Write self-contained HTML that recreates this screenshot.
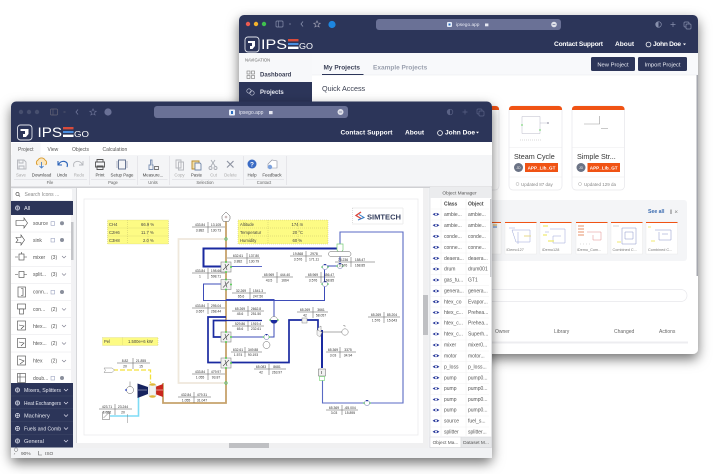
<!DOCTYPE html>
<html><head><meta charset="utf-8"><style>
html,body{margin:0;padding:0;background:#fff;width:720px;height:474px;overflow:hidden}
svg{display:block;font-family:"Liberation Sans",sans-serif;filter:blur(.3px)}
.h{fill:#fff;font-weight:700;font-size:6.6px}
.tb{font-size:4.4px;fill:#444;text-anchor:middle}
.tbd{font-size:4.4px;fill:#aaa;text-anchor:middle}
.gl{font-size:4.2px;fill:#666;text-anchor:middle}
.sb{font-size:5px;fill:#555}
.cat{font-size:5.6px;fill:#e6e8f0}
.om{font-size:5px;fill:#555}
.n{font-size:3.4px;fill:#333;text-anchor:middle}
.y{font-size:4.2px;fill:#444}
.lb{stroke:#555;stroke-width:.5;fill:none}
</style></head><body>
<svg width="720" height="474" viewBox="0 0 720 474">
<defs>
<filter id="s1" x="-15%" y="-15%" width="130%" height="135%"><feDropShadow dx="0" dy="5" stdDeviation="6" flood-color="#000" flood-opacity=".55"/></filter>
<g id="eye"><path d="M-3.4 0Q0-2.8 3.4 0Q0 2.8-3.4 0Z" fill="#2a3a9c"/><circle r="1" fill="#fff"/></g>
<path id="chev" d="M-2-1L0 1L2-1" fill="none" stroke="#778" stroke-width=".6"/>
<path id="chw" d="M-2-1L0 1L2-1" fill="none" stroke="#dde" stroke-width=".7"/>
<g id="ext"><rect x="-2" y="-1.6" width="3.6" height="3.6" fill="none" stroke="#8a93b5" stroke-width=".5"/><circle cx="9" cy="0" r="2" fill="#8a8f9c"/></g>
<g id="hub"><circle r="2.1" fill="none" stroke="#dfe2ee" stroke-width=".7"/><path d="M-2.1 0H2.1M0-2.1V2.1" stroke="#dfe2ee" stroke-width=".5"/></g>
<g id="hx"><rect x="-5" y="-5" width="10" height="10" fill="#f1f1f1" stroke="#888" stroke-width=".6"/><path d="M-3 3L3-3M-1-3L1 3" stroke="#444" stroke-width=".6"/><circle cx="5" cy="0" r="1" fill="#5c5"/><circle cx="0" cy="5" r="1" fill="#5c5"/><circle cx="0" cy="-5" r="1" fill="#5c5"/></g>
<g id="pmp"><circle r="2.6" fill="#fff" stroke="#8088b8" stroke-width=".6"/><path d="M-1.300 -3L1.300-3L0-1.200Z" fill="#1a2ea0"/><circle cx="-3" r=".8" fill="#5c5"/><circle cx="3" r=".8" fill="#5c5"/></g>
</defs>

<!-- BACK WINDOW -->
<rect x="239" y="15" width="459" height="339" rx="5" fill="#fff" filter="url(#s1)"/>
<path d="M239 53V20a5 5 0 0 1 5-5H693a5 5 0 0 1 5 5V53Z" fill="#2c3559"/>
<circle cx="248" cy="24" r="2.2" fill="#ec5b50"/><circle cx="256" cy="24" r="2.2" fill="#f3b32c"/><circle cx="264" cy="24" r="2.2" fill="#3fc14e"/>
<rect x="276" y="21" width="7" height="6" rx="1" fill="none" stroke="#8890ad" stroke-width=".7"/><path d="M278.5 21V27" stroke="#8890ad" stroke-width=".6"/>
<path d="M289 24h2" stroke="#8890ad" stroke-width=".7"/>
<path d="M303 21.5L301 24L303 26.5" fill="none" stroke="#8890ad" stroke-width=".8"/>
<path d="M317 20.8l1 2.2 2.3.2-1.8 1.5.6 2.3-2.1-1.2-2.1 1.2.6-2.3-1.8-1.5 2.3-.2z" fill="none" stroke="#aab" stroke-width=".6"/>
<circle cx="332" cy="24.5" r="3.6" fill="#1d86e0"/>
<rect x="376" y="19" width="185" height="11" rx="3" fill="#6a7196"/>
<rect x="447" y="22" width="5" height="5" rx="1" fill="#e8eefa"/><rect x="448.5" y="23.5" width="2" height="2" fill="#2a6dc0"/>
<text x="456" y="26.2" font-size="4.8" fill="#e6e8f2">ipsego.app</text>
<rect x="485" y="23.5" width="3.4" height="2.8" fill="#e6e8f2"/>
<circle cx="554" cy="24.5" r="2.8" fill="#dfe1ea"/><path d="M552.6 24.5h2.8" stroke="#6a7196" stroke-width=".7"/>
<circle cx="658.5" cy="24.5" r="2.8" fill="none" stroke="#8890ad" stroke-width=".7"/><path d="M658.5 21.7a2.8 2.8 0 0 0 0 5.6z" fill="#8890ad"/>
<path d="M670.5 24.5h5M673 22v5" stroke="#8890ad" stroke-width=".7"/>
<rect x="684" y="22" width="5" height="5" rx="1" fill="none" stroke="#8890ad" stroke-width=".7"/><rect x="686" y="24" width="5" height="5" rx="1" fill="#2c3559" stroke="#8890ad" stroke-width=".7"/>
<!-- back logo -->
<rect x="245" y="37" width="14" height="15" rx="3" fill="none" stroke="#dfe2ea" stroke-width=".9"/><path d="M248 41h7v5l-2.5 3H250v-3h2v-3h-4z" fill="#fff"/>
<text x="261" y="49" font-size="13.500" fill="#fff" textLength="26" lengthAdjust="spacingAndGlyphs">IPS</text>
<rect x="288" y="39" width="10.500" height="2.400" fill="#d94b3b"/><rect x="288" y="43" width="10.500" height="2" fill="#4a8fe0"/><rect x="288" y="46.600" width="10.500" height="2.400" fill="#fff"/>
<text x="299" y="49" font-size="8.500" fill="#fff" textLength="14" lengthAdjust="spacingAndGlyphs">GO</text>
<text x="554" y="46" class="h" textLength="49">Contact Support</text><text x="615" y="46" class="h">About</text>
<circle cx="648.5" cy="44.5" r="2.4" fill="none" stroke="#fff" stroke-width=".8"/><text x="653" y="46" class="h" textLength="28">John Doe</text><path d="M683 43.5h3l-1.5 1.7z" fill="#fff"/>
<!-- back sidebar -->
<rect x="239" y="53" width="73" height="301" fill="#f7f8fa"/>
<text x="245" y="61.5" font-size="4.2" fill="#666">NAVIGATION</text>
<g fill="none" stroke="#777" stroke-width=".6"><rect x="247" y="71" width="3" height="3"/><rect x="251.5" y="71" width="3" height="3"/><rect x="247" y="75.5" width="3" height="3"/><rect x="251.5" y="75.5" width="3" height="3"/></g>
<text x="260" y="76.5" font-size="6" font-weight="700" fill="#3a3f55">Dashboard</text>
<rect x="239" y="82" width="73" height="30" fill="#2c3559"/>
<g fill="none" stroke="#cfd3e2" stroke-width=".6"><circle cx="249" cy="91" r="2.2"/><circle cx="252" cy="93" r="2.2"/></g>
<text x="260" y="94" font-size="6" font-weight="700" fill="#e8eaf2">Projects</text>
<!-- back main -->
<rect x="312" y="53" width="386" height="22" fill="#f8f9fb"/><path d="M312 75H698" stroke="#e8e9ee" stroke-width=".6"/>
<text x="323.5" y="69.5" font-size="6.5" font-weight="700" fill="#3c4258">My Projects</text>
<path d="M322 74.5H363.5" stroke="#2c3559" stroke-width="1"/>
<text x="373" y="69.5" font-size="6.5" font-weight="700" fill="#9aa0ae">Example Projects</text>
<text x="322" y="91" font-size="7.2" fill="#3a3f50">Quick Access</text>
<rect x="591" y="57" width="44" height="14" rx="1.5" fill="#2c3559"/><text x="613" y="66.4" font-size="5.8" fill="#e8eaf2" text-anchor="middle">New Project</text>
<rect x="638" y="57" width="49" height="14" rx="1.5" fill="#2c3559"/><text x="662.5" y="66.4" font-size="5.8" fill="#e8eaf2" text-anchor="middle">Import Project</text>
<!-- cards -->
<g>
<rect x="455" y="106" width="44" height="84" rx="4" fill="#fff" stroke="#e6e6ea" stroke-width=".7"/>
<path d="M455 110v-1a3 3 0 0 1 3-3h38a3 3 0 0 1 3 3v1z" fill="#f05314"/>
<rect x="509" y="106" width="53" height="84" rx="4" fill="#fff" stroke="#e6e6ea" stroke-width=".7"/>
<path d="M509 110v-1a3 3 0 0 1 3-3h47a3 3 0 0 1 3 3v1z" fill="#f05314"/>
<path d="M509 147.5H562M509 177H562" stroke="#ebebee" stroke-width=".6"/>
<path d="M522 116.500H540V133.500H522ZM540 123H548" fill="none" stroke="#aab" stroke-width=".4"/><circle cx="522" cy="125" r="1" fill="#9d9"/><circle cx="540" cy="130" r="1" fill="#9d9"/><circle cx="548" cy="123" r=".9" fill="#99a"/>
<path d="M520 140H541" stroke="#ccc" stroke-width=".8" stroke-dasharray="1 1"/>
<text x="514" y="159" font-size="7.200" fill="#333">Steam Cycle</text>
<circle cx="518.500" cy="167.500" r="4.500" fill="#6b7385"/><text x="518.500" y="169" font-size="3.400" fill="#eee" text-anchor="middle">JD</text>
<rect x="525" y="163" width="33" height="9" fill="#f05314"/><text x="541.500" y="169.300" font-size="4.600" font-weight="700" fill="#fff" text-anchor="middle">APP_Lib_GT</text>
<circle cx="517.500" cy="184" r="1.500" fill="none" stroke="#999" stroke-width=".4"/><text x="521" y="185.800" font-size="4.500" fill="#888">Updated 87 day</text>
<rect x="572" y="106" width="52.500" height="84" rx="4" fill="#fff" stroke="#e6e6ea" stroke-width=".7"/>
<path d="M572 110v-1a3 3 0 0 1 3-3h46.500a3 3 0 0 1 3 3v1z" fill="#f05314"/>
<path d="M572 147.500H624.500M572 177H624.500" stroke="#ebebee" stroke-width=".6"/>
<path d="M584 124H599.500V116" fill="none" stroke="#999" stroke-width=".6"/><path d="M601 128.500h7" stroke="#bbb" stroke-width=".8"/>
<text x="577" y="159" font-size="7.200" fill="#333">Simple Str...</text>
<circle cx="581" cy="167.500" r="4.500" fill="#6b7385"/><text x="581" y="169" font-size="3.400" fill="#eee" text-anchor="middle">JD</text>
<rect x="587.500" y="163" width="32.500" height="9" fill="#f05314"/><text x="603.700" y="169.300" font-size="4.600" font-weight="700" fill="#fff" text-anchor="middle">APP_Lib_GT</text>
<circle cx="580" cy="184" r="1.500" fill="none" stroke="#999" stroke-width=".4"/><text x="584" y="185.800" font-size="4.500" fill="#888">Updated 129 da</text>
</g>
<!-- recent panel -->
<rect x="460" y="200" width="227" height="61" rx="3" fill="#f4f5f7"/>
<text x="648" y="213" font-size="5.200" font-weight="700" fill="#3a6bb0">See all</text>
<path d="M671 209.500V214" stroke="#444" stroke-width=".7"/><path d="M675 210.500l2.400 2.400m0-2.400l-2.400 2.400" stroke="#555" stroke-width=".5"/>
<g>
<rect x="470" y="222" width="31" height="32" fill="#fff" stroke="#e6e6e6" stroke-width=".4"/><path d="M470 222.500H501" stroke="#f05314" stroke-width="1"/><path d="M493 225h4" stroke="#e4a93a" stroke-width="1"/><path d="M493 227h4" stroke="#4a7fd0" stroke-width="1"/>
<rect x="505" y="222" width="31.500" height="32" fill="#fff" stroke="#e6e6e6" stroke-width=".4"/><path d="M505 222.500H536.500" stroke="#f05314" stroke-width="1"/><path d="M512 230h18v12h-14zM518 232v12M509 228h6" fill="none" stroke="#9aa5d8" stroke-width=".5"/><path d="M524 236h7" stroke="#e7d88a" stroke-width="1"/>
<text x="506.500" y="251" font-size="3.800" fill="#777">iDemo127</text>
<rect x="540" y="222" width="31.500" height="32" fill="#fff" stroke="#e6e6e6" stroke-width=".4"/><path d="M540 222.500H571.500" stroke="#f05314" stroke-width="1"/><path d="M550 229h15v14h-12v-7h8M545 232h4" fill="none" stroke="#9aa5d8" stroke-width=".5"/><path d="M543 226h5M543 235h4M548 241h6" stroke="#f0ea70" stroke-width="1.300"/>
<text x="542" y="251" font-size="3.800" fill="#777">iDemo128</text>
<rect x="576" y="222" width="31.500" height="32" fill="#fff" stroke="#e6e6e6" stroke-width=".4"/><path d="M576 222.500H607.500" stroke="#f05314" stroke-width="1"/><path d="M578 226h6M578 229h6M578 232h6M578 235h6" stroke="#efb59b" stroke-width="1.400"/><path d="M587 232h14v8h-8v-5" fill="none" stroke="#e08a8a" stroke-width=".5"/><path d="M580 244h10" stroke="#bbb" stroke-width=".5" stroke-dasharray="1 2"/>
<text x="577" y="251" font-size="3.800" fill="#777">iDemo_Com...</text>
<rect x="611" y="222" width="31.500" height="32" fill="#fff" stroke="#e6e6e6" stroke-width=".4"/><path d="M611 222.500H642.500" stroke="#f05314" stroke-width="1"/><path d="M622 228h14v16h-14zM625 232h8v7h-8z" fill="none" stroke="#8893c8" stroke-width=".5"/><path d="M613 226h6" stroke="#bbb" stroke-width=".6"/><path d="M617 242h4" stroke="#f0ea70" stroke-width="1"/>
<text x="612.500" y="251" font-size="3.800" fill="#777">Combined C...</text>
<rect x="646" y="222" width="31.500" height="32" fill="#fff" stroke="#e6e6e6" stroke-width=".4"/><path d="M646 222.500H677.500" stroke="#f05314" stroke-width="1"/><path d="M655 230h16v10h-12v-8M662 234h6" fill="none" stroke="#8893c8" stroke-width=".5"/><path d="M648 227h3M651 241h4" stroke="#f0ea70" stroke-width="1"/>
<text x="648" y="251" font-size="3.800" fill="#777">Combined C...</text>
</g>
<rect x="460" y="289.500" width="227" height="12" rx="6" fill="#fff" stroke="#e8e8ec" stroke-width=".7"/>
<g font-size="5" fill="#666"><text x="495" y="333">Owner</text><text x="554" y="333">Library</text><text x="614" y="333">Changed</text><text x="659" y="333">Actions</text></g>
<rect x="490" y="341.500" width="198" height="2" fill="#ededf0"/>
<rect x="696.500" y="75" width="1.500" height="201" fill="#a5a7ae"/>

<!-- FRONT WINDOW -->
<rect x="11" y="101.500" width="481" height="356.500" rx="5" fill="#eeeff1" filter="url(#s1)"/>
<path d="M11 142V106.500a5 5 0 0 1 5-5H487a5 5 0 0 1 5 5V142Z" fill="#2c3559"/>
<circle cx="21" cy="112" r="2.200" fill="#474f6e"/><circle cx="29" cy="112" r="2.200" fill="#474f6e"/><circle cx="37" cy="112" r="2.200" fill="#474f6e"/>
<rect x="50.500" y="109" width="7" height="6" rx="1" fill="none" stroke="#667" stroke-width=".7"/><path d="M53 109V115" stroke="#667" stroke-width=".6"/>
<path d="M63.500 112h2" stroke="#667" stroke-width=".7"/>
<path d="M78 109.500L76 112L78 114.500" fill="none" stroke="#70779a" stroke-width=".8"/>
<path d="M93 108.800l1 2.200 2.300.2-1.800 1.500.6 2.300-2.100-1.200-2.100 1.200.6-2.300-1.800-1.500 2.300-.2z" fill="none" stroke="#70779a" stroke-width=".6"/>
<circle cx="108" cy="112" r="3.600" fill="#6a7196"/>
<rect x="154" y="106" width="194" height="12" rx="3" fill="#6a7196"/>
<rect x="229" y="109.500" width="6" height="6" rx="1" fill="#e8eefa"/><rect x="231" y="111" width="2" height="3" fill="#2a6dc0"/>
<text x="239" y="114.200" font-size="5" fill="#e6e8f2">ipsego.app</text>
<rect x="269" y="111" width="3.600" height="3.200" fill="#e6e8f2"/>
<circle cx="340.500" cy="112" r="3" fill="#dfe1ea"/><path d="M339 112h3" stroke="#6a7196" stroke-width=".7"/>
<circle cx="450" cy="112" r="2.800" fill="none" stroke="#5a6285" stroke-width=".7"/><path d="M450 109.200a2.800 2.800 0 0 0 0 5.600z" fill="#5a6285"/>
<path d="M462.500 112h5M465 109.500v5" stroke="#5a6285" stroke-width=".7"/>
<rect x="477" y="109" width="5" height="5" rx="1" fill="none" stroke="#5a6285" stroke-width=".7"/><rect x="479" y="111" width="5" height="5" rx="1" fill="#2c3559" stroke="#5a6285" stroke-width=".7"/>
<!-- front logo -->
<rect x="17.500" y="125" width="14.500" height="15" rx="3" fill="none" stroke="#dfe2ea" stroke-width=".9"/><path d="M20.500 129h8v5l-2.500 3h-3v-3h2v-3h-4.500z" fill="#fff"/>
<text x="37.500" y="137" font-size="13.800" fill="#fff" textLength="24.500" lengthAdjust="spacingAndGlyphs">IPS</text>
<rect x="63" y="127" width="10.500" height="2.400" fill="#d94b3b"/><rect x="63" y="131" width="10.500" height="2" fill="#4a8fe0"/><rect x="63" y="134.600" width="10.500" height="2.400" fill="#fff"/>
<text x="74" y="137" font-size="8.500" fill="#fff" textLength="15" lengthAdjust="spacingAndGlyphs">GO</text>
<text x="340.500" y="134.500" class="h" textLength="52">Contact Support</text><text x="405" y="134.500" class="h">About</text>
<circle cx="440" cy="133" r="2.400" fill="none" stroke="#fff" stroke-width=".8"/><text x="445" y="134.500" class="h">John Doe</text><path d="M476 131.800h3l-1.500 1.700z" fill="#fff"/>
<!-- tabs -->
<rect x="11" y="142" width="481" height="13" fill="#fff"/>
<rect x="11.500" y="143" width="29" height="12" fill="#f4f5f7"/>
<g font-size="5" fill="#555"><text x="18" y="150.800">Project</text><text x="47.500" y="150.800">View</text><text x="72" y="150.800">Objects</text><text x="102.500" y="150.800">Calculation</text></g>
<!-- toolbar -->
<rect x="11" y="155" width="481" height="31.500" fill="#f4f5f7"/>
<rect x="11" y="186.500" width="481" height="1.500" fill="#cfd0d3"/>
<g stroke="#dcdde1" stroke-width=".6"><path d="M89.500 156V185M137.500 156V185M169.500 156V185M243.500 156V185M286.500 156V185"/><path d="M14 179.300H87M91 179.300H135.500M140 179.300H167.500M172 179.300H240M246 179.300H284"/></g>
<!-- toolbar icons -->
<g fill="none" stroke-width=".9">
<path d="M17.500 160h6.500l2 2v7h-8.500zM19 160v3h4v-3M19 169v-3h5v3" stroke="#b5b7bc"/>
<path d="M37.500 165a3 3 0 0 1 .5-5 4 4 0 0 1 7 0 3 3 0 0 1 .5 5" stroke="#d99a2c" fill="#fbe7c0"/><path d="M41.500 162v6m-2-2l2 2 2-2" stroke="#4a7fc8"/>
<path d="M58 161v4h4M58.500 165a5 5 0 0 1 8.500-2 5 5 0 0 1 0 4" stroke="#2a62b8" stroke-width="1.100"/>
<path d="M83 161v4h-4M82.500 165a5 5 0 0 0-8.500-2 5 5 0 0 0 0 4" stroke="#b5b7bc"/>
<path d="M97 162v-2.500h6v2.500M95.500 162h9v5h-9zM97 166h6v3.500h-6z" stroke="#555"/>
<rect x="118.500" y="160" width="7" height="9" stroke="#5a6a8a"/><path d="M117 161V168M127 161V168" stroke="#a9afc0"/>
<path d="M150.500 160v5h-1.500v4.500h4V165h-1v-5z" stroke="#7a8fb0"/><path d="M154.500 169.500h4v-3h-4z" stroke="#777"/>
<path d="M176 160h5v8h-5zM178.500 162h5v8h-5z" stroke="#b5b7bc"/>
<path d="M192 161h7v8h-7z" stroke="#b78b2b" fill="#f3dfa8"/><path d="M195 163h5l1 1v6h-6z" stroke="#7388a8" fill="#f5f6f8"/>
<path d="M211 160l4 6M215 160l-4 6" stroke="#a9adb5"/><circle cx="210.500" cy="168" r="1.500" stroke="#a9adb5"/><circle cx="215.500" cy="168" r="1.500" stroke="#a9adb5"/>
<path d="M227 161l6.500 6.500M233.500 161l-6.500 6.500" stroke="#8f95a3" stroke-width="1.200"/>
</g>
<circle cx="252" cy="164" r="4.500" fill="#3a6bc4"/><text x="252" y="166.300" font-size="6.500" font-weight="700" fill="#fff" text-anchor="middle">?</text>
<path d="M268 164l4-4 5 1v7h-9z" fill="#fff" stroke="#8b90a0" stroke-width=".6"/><circle cx="270" cy="167" r="2.200" fill="#7ea3dd"/>
<text class="tbd" x="21" y="176.300">Save</text><text class="tb" x="41.500" y="176.300">Download</text><text class="tb" x="62" y="176.300">Undo</text><text class="tbd" x="79" y="176.300">Redo</text>
<text class="tb" x="100" y="176.300">Print</text><text class="tb" x="122" y="176.300">Setup Page</text><text class="tb" x="153" y="176.300">Measure...</text>
<text class="tbd" x="179.500" y="176.300">Copy</text><text class="tb" x="196.500" y="176.300">Paste</text><text class="tbd" x="213.500" y="176.300">Cut</text><text class="tbd" x="230.500" y="176.300">Delete</text>
<text class="tb" x="252" y="176.300">Help</text><text class="tb" x="272" y="176.300">Feedback</text>
<text class="gl" x="50" y="184.200">File</text><text class="gl" x="113" y="184.200">Page</text><text class="gl" x="153" y="184.200">Units</text><text class="gl" x="205" y="184.200">Selection</text><text class="gl" x="264" y="184.200">Contact</text>
<!-- left panel -->
<rect x="11" y="188" width="65" height="260" fill="#f1f2f4"/>
<rect x="13" y="189" width="59" height="11" rx="1" fill="#fff"/>
<circle cx="17.500" cy="194" r="1.600" fill="none" stroke="#444" stroke-width=".6"/><path d="M18.700 195.200l1.300 1.300" stroke="#444" stroke-width=".6"/>
<text x="24.500" y="196" font-size="5" fill="#888">Search Icons ...</text>
<rect x="11" y="201" width="62" height="14" fill="#2c3559"/>
<use href="#hub" x="17.500" y="208"/><text x="24" y="210" class="cat">All</text>
<rect x="11" y="215" width="60" height="168" fill="#fff"/>
<rect x="71" y="215" width="2.500" height="168" fill="#f2f2f4"/><rect x="71" y="222" width="2.500" height="38" fill="#c4c5c9"/>
<g stroke="#e6e6e8" stroke-width=".5"><path d="M11 232H71M11 249.200H71M11 266.500H71M11 283.500H71M11 300.500H71M11 317.500H71M11 334.700H71M11 352H71M11 369.500H71"/></g>
<g class="sb" font-size="5" fill="#555">
<text x="33" y="224.800">source</text><text x="33" y="241.800">sink</text><text x="33" y="258.800">mixer</text><text x="33" y="276">split...</text><text x="33" y="293.500">conn...</text><text x="33" y="310.800">con...</text><text x="33" y="328">htex...</text><text x="33" y="345">htex...</text><text x="33" y="362.500">htex</text><text x="33" y="379.800">doub...</text>
<text x="51" y="258.800">(3)</text><text x="51" y="276">(3)</text><text x="51" y="310.800">(2)</text><text x="51" y="328">(2)</text><text x="51" y="345">(2)</text><text x="51" y="362.500">(2)</text>
</g>
<use href="#ext" x="53" y="223.300"/><use href="#ext" x="53" y="240"/><use href="#ext" x="53" y="292"/><use href="#ext" x="53" y="378"/>
<use href="#chev" x="64" y="257"/><use href="#chev" x="64" y="274.500"/><use href="#chev" x="64" y="309.300"/><use href="#chev" x="64" y="326"/><use href="#chev" x="64" y="343.500"/><use href="#chev" x="64" y="361"/>
<g fill="#fff" stroke="#444" stroke-width=".6">
<path d="M16 220.500h8v-2.500l3.500 5-3.500 5v-2.500h-8z"/><path d="M16 237.500h5v-2.500l3.500 5-3.500 5v-2.500h-5l2-2.500z"/>
<rect x="19" y="254" width="5" height="6"/><path d="M18 257h-3M24 257h3M21.500 254v-2" fill="none"/>
<rect x="19" y="271.500" width="5" height="6"/><path d="M18 274.500h-3M24 274.500h3" fill="none"/>
<rect x="18" y="287" width="7.500" height="10"/><path d="M21 288.500h2v7h-2" fill="none"/>
<rect x="17.500" y="304" width="8" height="5"/><rect x="19.500" y="309" width="4" height="5"/>
<rect x="17.500" y="321" width="8" height="9"/><path d="M19 325l5 1-3 3" fill="none"/>
<rect x="17.500" y="338.500" width="8" height="9"/><path d="M19 342l5 1-3 3" fill="none"/>
<rect x="17.500" y="356" width="8" height="9"/><path d="M19 359l5 2-4 3" fill="none"/>
<rect x="17.500" y="373.500" width="8" height="9"/><path d="M17.500 377h8M20 373.500v9" fill="none"/>
</g>
<!-- categories -->
<rect x="11" y="383" width="62" height="64.500" fill="#2c3559"/>
<g stroke="#3f4869" stroke-width=".5"><path d="M11 396H73M11 408.800H73M11 421.500H73M11 434.500H73"/></g>
<use href="#hub" x="17.500" y="390"/><use href="#hub" x="17.500" y="403"/><use href="#hub" x="17.500" y="415.500"/><use href="#hub" x="17.500" y="428.500"/><use href="#hub" x="17.500" y="441"/>
<text x="24" y="392" class="cat" textLength="37" lengthAdjust="spacingAndGlyphs">Mixers, Splitters</text>
<text x="24" y="405" class="cat" textLength="37" lengthAdjust="spacingAndGlyphs">Heat Exchangers</text>
<text x="24" y="417.500" class="cat">Machinery</text>
<text x="24" y="430.500" class="cat" textLength="37" lengthAdjust="spacingAndGlyphs">Fuels and Comb</text>
<text x="24" y="443" class="cat">General</text>
<use href="#chw" x="66" y="390"/><use href="#chw" x="66" y="403"/><use href="#chw" x="66" y="415.500"/><use href="#chw" x="66" y="428.500"/><use href="#chw" x="66" y="441"/>
<!-- status -->
<rect x="11" y="448" width="481" height="10" fill="#f1f2f4"/>
<path d="M16 451.500a1.800 1.800 0 1 1 .1 0M15 453l-1 1.500" fill="none" stroke="#666" stroke-width=".5"/>
<text x="21" y="455" font-size="4.800" fill="#555">90%</text>
<path d="M38.500 451v4h3.500" fill="none" stroke="#666" stroke-width=".6"/><text x="45" y="455" font-size="4.800" fill="#555">ISO</text>

<!-- canvas -->
<rect x="76" y="188" width="352" height="260" fill="#fff"/>
<rect x="76" y="188" width="1" height="260" fill="#d6d7da"/>
<rect x="84" y="199" width="334" height="236" fill="#fff" stroke="#e9e9ea" stroke-width=".7"/>
<rect x="76" y="443" width="347" height="5" fill="#f0f0f1"/><rect x="229" y="443" width="40" height="5" fill="#bfc0c3"/>
<rect x="423" y="188" width="5" height="260" fill="#f0f0f1"/><rect x="423" y="295" width="5" height="40" fill="#bfc0c3"/>

<!-- yellow tables -->
<g>
<rect x="107.500" y="220" width="61" height="24" fill="#fdfb84" stroke="#b9b66a" stroke-width=".4" stroke-dasharray="1 1"/>
<path d="M107.500 228H168.500M107.500 236H168.500M127.500 220V244M148 220V244" stroke="#b9b66a" stroke-width=".4" stroke-dasharray="1 1" fill="none"/>
<text x="109" y="225.800" class="y">CH4</text><text x="141" y="225.800" class="y">66.9 %</text>
<text x="109" y="233.800" class="y">C2H6</text><text x="141" y="233.800" class="y">11.7 %</text>
<text x="109" y="241.800" class="y">C3H8</text><text x="143" y="241.800" class="y">2.0 %</text>
<rect x="238" y="220" width="90" height="24" fill="#fdfb84" stroke="#b9b66a" stroke-width=".4" stroke-dasharray="1 1"/>
<path d="M238 228H328M238 236H328M268 220V244M298 220V244" stroke="#b9b66a" stroke-width=".4" stroke-dasharray="1 1" fill="none"/>
<text x="240" y="225.800" class="y">Altitude</text><text x="291.500" y="225.800" class="y">174 m</text>
<text x="240" y="233.800" class="y">Temperatur</text><text x="292.500" y="233.800" class="y">20 °C</text>
<text x="240" y="241.800" class="y">Humidity</text><text x="292.500" y="241.800" class="y">60 %</text>
<rect x="102.500" y="337.500" width="55.500" height="8" fill="#fdfb84" stroke="#b9b66a" stroke-width=".4" stroke-dasharray="1 1"/>
<path d="M122.500 337.500V345.500" stroke="#b9b66a" stroke-width=".4" stroke-dasharray="1 1"/>
<text x="104" y="343" class="y">Pel</text><text x="128" y="343" class="y">1.500e+6 kW</text>
</g>
<!-- logo simtech -->
<rect x="352.500" y="208" width="50.500" height="16" fill="#fff" stroke="#aaa" stroke-width=".4" stroke-dasharray="1 1"/>
<path d="M361 212l-5 3.500 5 3" fill="none" stroke="#d9453c" stroke-width="1.300"/><path d="M358 220l6-2.500-5-3" fill="none" stroke="#2e79c4" stroke-width="1"/>
<text x="367" y="219.500" font-size="7" font-weight="700" fill="#36405f" textLength="34" lengthAdjust="spacingAndGlyphs">SIMTECH</text>

<!-- pipes -->
<g fill="none">
<path d="M226 239H178.500V383H226" stroke="#efe8dc" stroke-width="1.800"/>
<path d="M226 218V403H163V383" stroke="#c6a26c" stroke-width="1.800"/>
<path d="M340 248.500H203.500V266.500H226" stroke="#1a2aa0" stroke-width="2"/>
<path d="M226 266.500H262" stroke="#5a68c8" stroke-width="1"/>
<path d="M226 284H203.500V300.500H226" stroke="#3d4cb8" stroke-width="1"/>
<path d="M226 300.500H324.500V267" stroke="#3d4cb8" stroke-width="1"/>
<path d="M340 245V232H403V403H322.500V380" stroke="#5a6ac4" stroke-width="1.100"/>
<path d="M340 262V248" stroke="#3d4cb8" stroke-width="1"/>
<path d="M326 266H340" stroke="#3d4cb8" stroke-width="1"/>
<path d="M226 317H208V362.500H289V320H318V330" stroke="#1a2aa0" stroke-width="1.700"/>
<path d="M226 320.500H213.500V337H226" stroke="#1a2aa0" stroke-width="1.700"/>
<path d="M226 337H274V320" stroke="#3d4cb8" stroke-width="1"/>
<path d="M226 320.500H262" stroke="#1a2aa0" stroke-width="1.300"/>
<path d="M274 317V299.500H226" stroke="#3d4cb8" stroke-width="1"/>
<path d="M322 330V368" stroke="#1a2aa0" stroke-width="2"/>
<path d="M322 332H342" stroke="#555" stroke-width=".6"/>
<path d="M113 370H150.500V383" stroke="#f3e13a" stroke-width="1.300" stroke-dasharray="5 2"/>
<path d="M110 416H138.500V397" stroke="#7fdcf5" stroke-width="1.600"/>
</g>
<!-- equipment -->
<path d="M222 219v-3l4-4 4 4v3l-1.500 2.500h-5z" fill="#fff" stroke="#555" stroke-width=".5"/><circle cx="226" cy="217" r="1.300" fill="#cbb"/>
<circle cx="226" cy="239" r="1.300" fill="#aaa" stroke="#5c5" stroke-width=".6"/>
<circle cx="226" cy="383" r="1.300" fill="#aaa" stroke="#5c5" stroke-width=".6"/>
<use href="#hx" x="226" y="267"/><use href="#hx" x="226" y="284.500"/><use href="#hx" x="226" y="337"/><use href="#hx" x="226" y="363"/>
<!-- condenser-ish -->
<path d="M337 244h6v6l-1.500 2h-3l-1.500-2z" fill="#fff" stroke="#7c7" stroke-width=".7"/><rect x="328.500" y="251.500" width="22.500" height="5" rx="2.500" fill="#fff" stroke="#666" stroke-width=".5"/>
<use href="#pmp" x="325" y="267"/><use href="#pmp" x="340" y="266"/><use href="#pmp" x="325" y="284"/>
<circle cx="274" cy="320" r="3.500" fill="#fff" stroke="#555" stroke-width=".4"/><path d="M270.500 320a3.500 3.500 0 0 0 7 0z" fill="#1a2aa0"/><circle cx="270" cy="320" r=".8" fill="#5c5"/><circle cx="278" cy="320" r=".8" fill="#5c5"/>
<use href="#pmp" x="266.500" y="337"/><circle cx="266.500" cy="345" r="3.500" fill="#fff" stroke="#666" stroke-width=".5"/>
<rect x="302" y="318" width="5" height="5" fill="#f2f2f2" stroke="#888" stroke-width=".5"/>
<path d="M318 328l3-2v10l-3-2z" fill="#fff" stroke="#555" stroke-width=".4"/><circle cx="345" cy="332" r="3.200" fill="#fff" stroke="#777" stroke-width=".5"/><path d="M345 327v-1.500h-2" fill="none" stroke="#666" stroke-width=".4"/>
<path d="M317 330v5l3 2 2-5z" fill="#f4f4f4" stroke="#777" stroke-width=".4"/>
<rect x="318.500" y="369" width="7" height="7" fill="#f1f1f1" stroke="#666" stroke-width=".5"/><path d="M321.500 371v3" stroke="#333" stroke-width=".5"/><rect x="319.500" y="376.500" width="5" height="4" fill="#fff" stroke="#5c5" stroke-width=".5"/>
<use href="#pmp" x="367" y="403"/>
<!-- turbine -->
<path d="M137.500 383.500L148 387V394L137.500 398z" fill="#16235f"/><path d="M138 390h9" stroke="#fff" stroke-width=".4"/>
<path d="M163 384L155 387V394L163 397z" fill="#c9261c"/><path d="M156 390h7" stroke="#fff" stroke-width=".5"/>
<rect x="149" y="385" width="7" height="11" fill="#f2f2f2" stroke="#999" stroke-width=".3"/>
<ellipse cx="152.500" cy="384.500" rx="3.200" ry="1.200" fill="#e0b83a"/><ellipse cx="152.500" cy="396.500" rx="3.200" ry="1.200" fill="#e0b83a"/>
<circle cx="130" cy="390" r="3.600" fill="#fff" stroke="#666" stroke-width=".5"/><circle cx="126" cy="390" r=".9" fill="#2740c8"/><path d="M130 386.500v-5" stroke="#666" stroke-width=".5"/>
<path d="M104 368h8l2.500 2-2.500 2.500h-8l1.500-2.200z" fill="#fff" stroke="#888" stroke-width=".5"/>
<rect x="102.500" y="412" width="7" height="7.500" fill="#fff" stroke="#666" stroke-width=".5"/><path d="M103.500 418l5-5" stroke="#555" stroke-width=".5"/>
<path d="M127.500 414V423" stroke="#666" stroke-width=".4"/>

<!-- labels -->
<path class="lb" d="M192 227H225M208 222V233M192 273H225M208 268V279M192 308H225M208 303V314M227 258H260M247 253V264M232 293H266M250 288V299M232 311H264M248 306V316M232 326H264M248 321V331M290 256H322M306 251V262M335 262H375M351 257V267M262 277H293M277 272V283M305 277H335M321 272V283M297 312H328M313 307V318M368 317H400M384 312V323M117 363H150M133 358V369M99 409H132M115 404V415M178 397H211M194 392V403M192 374H225M208 369V380M231 352H262M245 347V357M254 369H286M269 364V375M326 352H356M340 347V358M326 410H358M342 405V415"/>
<g class="n">
<text x="200" y="226">433.84</text><text x="216" y="226">13.105</text><text x="200" y="231.500">3.882</text><text x="216" y="231.500">130.73</text>
<text x="200" y="272">433.84</text><text x="216" y="272">198.66</text><text x="200" y="277.500">1</text><text x="216" y="277.500">598.71</text>
<text x="200" y="307">433.84</text><text x="216" y="307">295.04</text><text x="200" y="312.500">3.657</text><text x="216" y="312.500">268.44</text>
<text x="238" y="257">632.61</text><text x="254" y="257">137.80</text><text x="238" y="262.500">3.882</text><text x="254" y="262.500">130.79</text>
<text x="241" y="292">32.269</text><text x="258" y="292">1541.3</text><text x="241" y="297.500">65.6</text><text x="258" y="297.500">247.50</text>
<text x="240" y="310">65.269</text><text x="256" y="310">2662.8</text><text x="240" y="315">45.6</text><text x="256" y="315">251.50</text>
<text x="240" y="325">529.86</text><text x="256" y="325">1919.4</text><text x="240" y="330">65.6</text><text x="256" y="330">232.61</text>
<text x="298" y="255">19.868</text><text x="314" y="255">2978</text><text x="298" y="260.500">3.576</text><text x="314" y="260.500">171.11</text>
<text x="343" y="261">78.236</text><text x="360" y="261">158.47</text><text x="343" y="266.500">3.576</text><text x="360" y="266.500">168.85</text>
<text x="269" y="276">65.969</text><text x="285" y="276">444.40</text><text x="269" y="281.500">43.5</text><text x="285" y="281.500">1664</text>
<text x="313" y="276">65.969</text><text x="329" y="276">456.47</text><text x="313" y="281.500">3.576</text><text x="329" y="281.500">168.85</text>
<text x="305" y="311">65.269</text><text x="321" y="311">3661</text><text x="305" y="316.500">42</text><text x="321" y="316.500">58.057</text>
<text x="376" y="316">65.269</text><text x="392" y="316">85.204</text><text x="376" y="321.500">1.576</text><text x="392" y="321.500">15.643</text>
<text x="125" y="362">8.82</text><text x="141" y="362">21.855</text><text x="125" y="367.500">20</text><text x="141" y="367.500">15</text>
<text x="107" y="408">423.71</text><text x="123" y="408">23.244</text><text x="107" y="413.500">1.032</text><text x="123" y="413.500">20</text>
<text x="186" y="396">432.84</text><text x="202" y="396">479.31</text><text x="186" y="401.500">1.055</text><text x="202" y="401.500">31.047</text>
<text x="200" y="373">433.84</text><text x="216" y="373">479.97</text><text x="200" y="378.500">1.055</text><text x="216" y="378.500">93.87</text>
<text x="238" y="351">632.61</text><text x="253" y="351">349.88</text><text x="238" y="356">1.574</text><text x="253" y="356">90.193</text>
<text x="261" y="368">65.083</text><text x="277" y="368">8681</text><text x="261" y="373.500">42</text><text x="277" y="373.500">263.97</text>
<text x="333" y="351">65.369</text><text x="348" y="351">3375</text><text x="333" y="356.500">3.03</text><text x="348" y="356.500">34.94</text>
<text x="334" y="409">65.369</text><text x="350" y="409">-65.004</text><text x="334" y="414">3.03</text><text x="350" y="414">15.895</text>
</g>

<!-- object manager -->
<rect x="428" y="188" width="2" height="260" fill="#f1f2f4"/>
<rect x="430" y="186.500" width="61.500" height="261" fill="#fff" stroke="#d5d6d9" stroke-width=".6"/>
<rect x="430" y="187" width="61.500" height="11" fill="#ebecee"/>
<text x="459.500" y="194.500" font-size="4.800" fill="#555" text-anchor="middle">Object Manager</text>
<text x="444" y="205.600" font-size="5" font-weight="700" fill="#444">Class</text><text x="468" y="205.600" font-size="5" font-weight="700" fill="#444">Object</text>
<rect x="490" y="199" width="1.500" height="78" fill="#c9cacd"/>
<path d="M466 199V436M441 199V436" stroke="#eee" stroke-width=".5"/>
<g stroke="#eee" stroke-width=".4"><path d="M430 209H489M430 220H489M430 231H489M430 242H489M430 253H489M430 263.500H489M430 274.500H489M430 285.500H489M430 296.500H489M430 307H489M430 318H489M430 329H489M430 340H489M430 351H489M430 361.500H489M430 372.500H489M430 383.500H489M430 394.500H489M430 405H489M430 416H489M430 427H489"/></g>
<use href="#eye" x="436" y="214.300"/><use href="#eye" x="436" y="225.300"/><use href="#eye" x="436" y="236.300"/><use href="#eye" x="436" y="247.300"/><use href="#eye" x="436" y="258.300"/><use href="#eye" x="436" y="269"/><use href="#eye" x="436" y="280"/><use href="#eye" x="436" y="291"/><use href="#eye" x="436" y="301.700"/><use href="#eye" x="436" y="312.500"/><use href="#eye" x="436" y="323"/><use href="#eye" x="436" y="334"/><use href="#eye" x="436" y="345"/><use href="#eye" x="436" y="355.700"/><use href="#eye" x="436" y="366.700"/><use href="#eye" x="436" y="377.700"/><use href="#eye" x="436" y="388.500"/><use href="#eye" x="436" y="399.500"/><use href="#eye" x="436" y="410"/><use href="#eye" x="436" y="420.700"/><use href="#eye" x="436" y="431.700"/>
<g class="om">
<text x="444" y="216">ambie...</text><text x="468" y="216">ambie...</text>
<text x="444" y="227">ambie...</text><text x="468" y="227">ambie...</text>
<text x="444" y="238">conde...</text><text x="468" y="238">conde...</text>
<text x="444" y="249">conne...</text><text x="468" y="249">conne...</text>
<text x="444" y="260">deaera...</text><text x="468" y="260">deaera...</text>
<text x="444" y="270.700">drum</text><text x="468" y="270.700">drum001</text>
<text x="444" y="281.700">gas_tu...</text><text x="468" y="281.700">GT1</text>
<text x="444" y="292.700">genera...</text><text x="468" y="292.700">genera...</text>
<text x="444" y="303.400">htex_co</text><text x="468" y="303.400">Evapor...</text>
<text x="444" y="314.200">htex_c...</text><text x="468" y="314.200">Prehea...</text>
<text x="444" y="324.700">htex_c...</text><text x="468" y="324.700">Prehea...</text>
<text x="444" y="335.700">htex_c...</text><text x="468" y="335.700">Superh...</text>
<text x="444" y="346.700">mixer</text><text x="468" y="346.700">mixer0...</text>
<text x="444" y="357.400">motor</text><text x="468" y="357.400">motor...</text>
<text x="444" y="368.400">p_loss</text><text x="468" y="368.400">p_loss...</text>
<text x="444" y="379.400">pump</text><text x="468" y="379.400">pump0...</text>
<text x="444" y="390.200">pump</text><text x="468" y="390.200">pump0...</text>
<text x="444" y="401.200">pump</text><text x="468" y="401.200">pump0...</text>
<text x="444" y="411.700">pump</text><text x="468" y="411.700">pump0...</text>
<text x="444" y="422.400">source</text><text x="468" y="422.400">fuel_s...</text>
<text x="444" y="433.400">splitter</text><text x="468" y="433.400">splitter...</text>
</g>
<rect x="430" y="437" width="31" height="10.500" fill="#fff" stroke="#d5d6d9" stroke-width=".5"/>
<rect x="461" y="437" width="30.500" height="10.500" fill="#e7e8ea" stroke="#d5d6d9" stroke-width=".5"/>
<text x="445.500" y="444" font-size="4.800" fill="#555" text-anchor="middle">Object Ma...</text><text x="476" y="444" font-size="4.800" fill="#555" text-anchor="middle">Dataset M...</text>
</svg>
</body></html>
